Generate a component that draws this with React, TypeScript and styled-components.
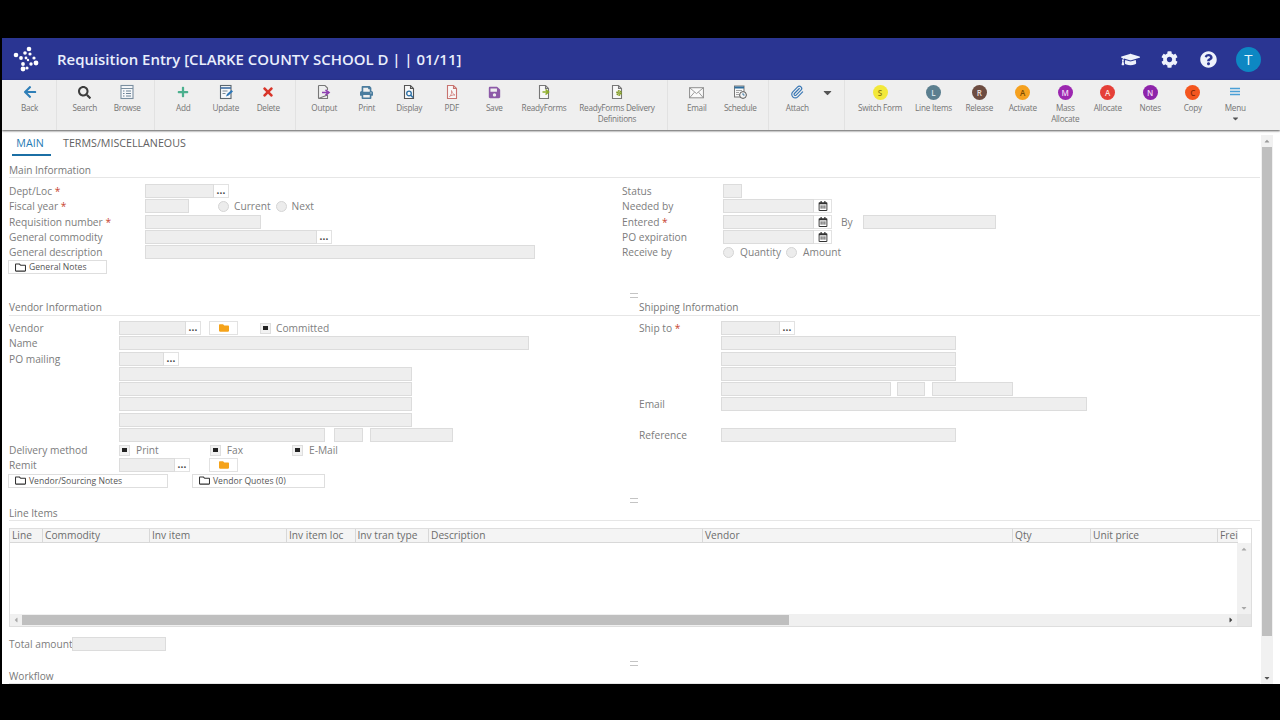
import React from 'react';
import styled, { createGlobalStyle } from 'styled-components';
import { FaArrowLeft, FaSearch, FaPlus, FaTimes, FaPrint, FaSave, FaCaretDown, FaCaretUp, FaCaretLeft, FaCaretRight, FaGraduationCap, FaCog, FaQuestionCircle, FaFolder, FaRegFolder, FaRegCalendarAlt } from 'react-icons/fa';
import { Paperclip } from 'lucide-react';

const Global = createGlobalStyle`
  html, body { margin: 0; padding: 0; background: #000; }
  * { box-sizing: border-box; }
  body { font-family: "Open Sans", "Liberation Sans", sans-serif; }
`;

const Page = styled.div`
  width: 1280px; height: 720px; background: #000; padding: 38px 0 36px 2px; overflow: hidden;
`;
const Frame = styled.div`
  height: 646px; background: #fff; display: flex; flex-direction: column; overflow: hidden;
`;
const Header = styled.header`
  height: 42px; flex: none; background: #2a3592; display: flex; align-items: center; color: #fff;
`;
const LogoBox = styled.svg`
  width: 30px; height: 30px; margin-left: 10px; flex: none;
`;
const Title = styled.h1`
  margin: 0 0 0 15px; font-size: 14.95px; font-weight: 600; color: #e9eefc; white-space: nowrap; flex: 1;
`;
const HeadIcon = styled.span`
  width: 39px; display: flex; justify-content: center; color: #eef2fb; font-size: 17px;
`;
const Avatar = styled.span`
  width: 25px; height: 25px; border-radius: 50%; background: #0d87c3; color: #e8f4fb; font-size: 15px;
  display: flex; align-items: center; justify-content: center; margin: 0 19px 0 8px;
`;
const Toolbar = styled.nav`
  height: 50px; flex: none; background: #efefef; display: flex; box-shadow: 0 1px 2px rgba(0,0,0,.65); position: relative; z-index: 1;
`;
const Group = styled.div<{ $w?: number; $pl?: number }>`
  display: flex; flex: none; width: ${p => (p.$w ? `${p.$w}px` : 'auto')}; padding-left: ${p => p.$pl ?? 0}px;
  border-right: ${p => (p.$w ? '1px solid #e2e2e2' : 'none')};
`;
const Tool = styled.div<{ $w: number }>`
  width: ${p => p.$w}px; flex: none; display: flex; flex-direction: column; align-items: center; padding-top: 4px;
`;
const ToolIcon = styled.div`
  height: 16px; display: flex; align-items: center; justify-content: center; font-size: 14px;
`;
const ToolLabel = styled.div`
  margin-top: 2px; font-size: 8.2px; letter-spacing: -0.25px; line-height: 11.4px; color: #757575; text-align: center; white-space: nowrap;
`;
const Badge = styled.span<{ $bg: string; $fg: string }>`
  width: 15px; height: 15px; border-radius: 50%; background: ${p => p.$bg}; color: ${p => p.$fg};
  font-size: 8px; font-weight: 600; display: flex; align-items: center; justify-content: center;
`;
const SmallCaret = styled.div`
  font-size: 9px; color: #555; line-height: 8px; height: 8px; margin-top: 1px;
`;
const Body = styled.div`
  flex: 1; min-height: 0; display: flex;
`;
const Main = styled.main`
  width: 1259px; flex: none; padding: 0 1px 0 7px; overflow: hidden;
`;
const Tabs = styled.div`
  height: 26px; display: flex; margin-left: 3px;
`;
const Tab = styled.div<{ $active?: boolean; $w: number; $ml?: number; $pr?: number }>`
  width: ${p => p.$w}px; margin-left: ${p => p.$ml ?? 0}px; padding: 1px ${p => p.$pr ?? 0}px 0 0; font-size: 10.7px; font-weight: 500; text-align: center; line-height: 24px; white-space: nowrap;
  color: ${p => (p.$active ? '#1f7bb3' : '#616161')};
  border-bottom: 2px solid ${p => (p.$active ? '#1b6fa5' : 'transparent')};
`;
const Heading = styled.div<{ $lh?: number; $mt?: number }>`
  height: 20px; margin-top: ${p => p.$mt ?? 0}px; display: flex; align-items: flex-end; border-bottom: 1px solid #e6e6e6;
  font-size: 10.1px; line-height: ${p => p.$lh ?? 14}px; color: #787878; white-space: nowrap;
`;
const Columns = styled.div<{ $left: number }>`
  display: grid; grid-template-columns: ${p => p.$left}px 1fr;
`;
const Rows = styled.div<{ $top: number }>`
  padding-top: ${p => p.$top}px;
`;
const Row = styled.div`
  height: 15.27px; display: flex; align-items: center; white-space: nowrap;
`;
const Label = styled.label<{ $w: number }>`
  width: ${p => p.$w}px; flex: none; font-size: 10.2px; color: #7c7c7c;
`;
const Req = styled.span`
  color: #c8442f;
`;
const Text = styled.span<{ $ml?: number }>`
  font-size: 10.2px; color: #808080; margin-left: ${p => p.$ml ?? 0}px;
`;
const Input = styled.div<{ $w: number; $ml?: number }>`
  width: ${p => p.$w}px; height: 14px; flex: none; background: #eeeeee; border: 1px solid #dcdcdc; margin-left: ${p => p.$ml ?? 0}px;
`;
const SideBtn = styled.div<{ $w: number }>`
  width: ${p => p.$w}px; height: 14px; flex: none; background: #fff; border: 1px solid #e2e2e2; border-left: none; display: flex; align-items: center; justify-content: center;
  font-size: 10px; font-weight: 700; color: #444; line-height: 14px;
`;
const Dots = styled.span` transform: translateY(-1px); letter-spacing: .2px; `;
const FolderBtn = styled.div<{ $ml: number }>`
  width: 29px; height: 14px; flex: none; margin-left: ${p => p.$ml}px; background: #fff; border: 1px solid #e2e2e2; display: flex; align-items: center; justify-content: center;
  color: #f5a31a; font-size: 10px;
`;
const Radio = styled.span<{ $ml: number }>`
  width: 11px; height: 11px; flex: none; border-radius: 50%; background: #ececec; border: 1px solid #d5d5d5; margin-left: ${p => p.$ml}px;
`;
const Check = styled.span<{ $ml: number }>`
  width: 11px; height: 11px; flex: none; margin-left: ${p => p.$ml}px; background: #f2f2f2; border: 1px solid #dedede; display: flex; align-items: center; justify-content: center;
  &::after { content: ''; width: 5px; height: 4px; background: #222; }
`;
const NoteBtn = styled.div<{ $w: number; $ml?: number; $pl: number }>`
  width: ${p => p.$w}px; height: 14px; flex: none; margin-left: ${p => p.$ml ?? 0}px; padding-left: ${p => p.$pl}px; background: #fff; border: 1px solid #dedede;
  display: flex; align-items: center; gap: 3px; font-size: 8.6px; color: #555; white-space: nowrap;
  svg { font-size: 11px; color: #333; flex: none; }
`;
const Splitter = styled.div<{ $mt: number }>`
  height: 4px; margin-top: ${p => p.$mt}px; display: flex; justify-content: center; padding-right: 1px;
  &::after { content: ''; width: 8px; height: 3px; margin-top: 1px; border-top: 1px solid #c4c4c4; border-bottom: 1px solid #c4c4c4; }
`;
const Grid = styled.div`
  width: 1243px; height: 99px; margin-top: 6.6px; border: 1px solid #dedede; display: flex; flex-direction: column;
`;
const GridHead = styled.div`
  width: 1228px; height: 14px; flex: none; display: flex; overflow: hidden;
`;
const Col = styled.div<{ $w: number }>`
  width: ${p => p.$w}px; flex: none; background: #f4f4f4; border-right: 1px solid #d8d8d8; border-bottom: 1px solid #d8d8d8; font-size: 10.2px; color: #6c6c6c; padding-left: 2px; line-height: 13px; white-space: nowrap; overflow: hidden;
`;
const GridBody = styled.div`
  flex: 1; min-height: 0; display: flex; justify-content: flex-end;
`;
const VTrack = styled.div`
  width: 14px; background: #f1f1f1; display: flex; flex-direction: column; justify-content: space-between; align-items: center; color: #a8a8a8; font-size: 8px; padding: 2px 0;
`;
const HTrack = styled.div`
  height: 12px; flex: none; background: #f0f0f0; display: flex; align-items: center;
`;
const Arrow = styled.div<{ $w: number; $dark?: boolean }>`
  width: ${p => p.$w}px; flex: none; display: flex; align-items: center; justify-content: center; font-size: 8px; color: ${p => (p.$dark ? '#444' : '#aaa')};
`;
const HThumb = styled.div`
  width: 767px; height: 10px; background: #bfbfbf;
`;
const HRest = styled.div` flex: 1; `;
const Corner = styled.div`
  width: 14px; height: 12px; flex: none; background: #e6e6e6;
`;
const TotalRow = styled.div`
  height: 14px; margin-top: 10px; display: flex; align-items: center; white-space: nowrap;
`;
const PageScroll = styled.aside`
  width: 12px; margin-top: 5px; flex: none; background: #f1f1f1; display: flex; flex-direction: column; align-items: center; color: #999; font-size: 8px;
`;
const PageArrow = styled.div`
  height: 12px; flex: none; display: flex; align-items: center; justify-content: center;
`;
const PageThumb = styled.div`
  width: 10px; height: 489px; flex: none; background: #bfbfbf;
`;
const PageRest = styled.div` flex: 1; `;
const PageEnd = styled.div`
  flex: none; height: 12px; display: flex; align-items: center; color: #555;
`;

const Svg: React.FC<{ children: React.ReactNode; size?: number }> = ({ children, size = 16 }) => (
  <svg width={size} height={size} viewBox="0 0 16 16" fill="none">{children}</svg>
);
const Doc = ({ c = '#777' }: { c?: string }) => (
  <path d="M3.5 1.5h6l3 3v10h-9z M9.5 1.5v3h3" stroke={c} strokeWidth="1.1" fill="#f8f8f8" />
);
const BrowseIcon = () => (
  <Svg><rect x="2" y="1.5" width="12" height="13" stroke="#7a8fa0" strokeWidth="1.1" fill="#f6f8fa" /><path d="M2 4.5h12" stroke="#7a8fa0" /><path d="M4 7h1.5M7 7h5M4 9.5h1.5M7 9.5h5M4 12h1.5M7 12h5" stroke="#6b8296" /></Svg>
);
const UpdateIcon = () => (
  <Svg><rect x="2.5" y="1.5" width="10.5" height="13" stroke="#5b6770" strokeWidth="1.1" fill="#f6f8fa" /><path d="M2.5 4h10.5" stroke="#3f6fa5" strokeWidth="1.6" /><path d="M4.5 7h5M4.5 9.5h3" stroke="#7a8a96" /><path d="M8 12.5l1-2.5 4.5-4 1.5 1.5-4.5 4z" fill="#2c77b8" /></Svg>
);
const OutputIcon = () => (
  <Svg><path d="M2.5 1.5h6.5l2.5 2.5v2M11.5 11v3.5h-9z" stroke="#777" strokeWidth="1.1" fill="none" /><path d="M2.5 1.5v13" stroke="#777" strokeWidth="1.1" /><path d="M6 8.5h5.5M9.5 5.8l3.5 2.7-3.5 2.7" stroke="#8d3fb0" strokeWidth="1.6" fill="none" /></Svg>
);
const DisplayIcon = () => (
  <Svg><Doc c="#555" /><circle cx="8" cy="9.5" r="2.3" stroke="#2a6fa5" strokeWidth="1.3" /><path d="M9.8 11.3l2.2 2.2" stroke="#2a6fa5" strokeWidth="1.5" /></Svg>
);
const PdfIcon = () => (
  <Svg><Doc c="#c8736f" /><path d="M5.5 12.5c2-1.5 2.5-4.5 2-6 .5 2.5 2 4 3.5 4.5-2-.2-4 .4-5.5 1.5z" stroke="#d07a76" strokeWidth=".8" fill="none" /></Svg>
);
const RfIcon = () => (
  <Svg><Doc c="#777" /><path d="M6.5 8h5M9.5 5.5l3 2.5-3 2.5" stroke="#8fae2b" strokeWidth="1.6" fill="none" /></Svg>
);
const RfdIcon = () => (
  <Svg><Doc c="#777" /><circle cx="10" cy="9" r="2" stroke="#7f9a1e" strokeWidth="1.8" strokeDasharray="1.4 .5" /><circle cx="10" cy="9" r="1" fill="#7f9a1e" /></Svg>
);
const MailIcon = () => (
  <Svg size={17}><rect x="1.5" y="3.5" width="13" height="9.5" stroke="#8a8a8a" strokeWidth=".9" fill="#fafafa" /><path d="M1.5 3.5L8 9l6.5-5.5M1.5 13L6 7.8M14.5 13L10 7.8" stroke="#8a8a8a" strokeWidth=".8" /></Svg>
);
const ScheduleIcon = () => (
  <Svg><rect x="2.5" y="2" width="9.5" height="11" stroke="#777" strokeWidth="1" fill="#f8f8f8" /><path d="M2.5 3.5h9.5" stroke="#2f6f9f" strokeWidth="2" /><path d="M4 6.5h6M4 8.5h3M4 10.5h3" stroke="#999" strokeWidth=".9" /><circle cx="11" cy="11" r="3.4" stroke="#555" strokeWidth="1" fill="#f4f4f4" /><path d="M11 9.2V11h1.6" stroke="#2f6f9f" strokeWidth=".9" /></Svg>
);
const MenuIcon = () => (
  <Svg><path d="M3 4.5h10M3 7.5h10M3 10.5h10" stroke="#4ba0d6" strokeWidth="1.5" /></Svg>
);
const Logo = () => {
  const dots: [number, number, number][] = [[15, 4, 2.3], [11, 8, 1.8], [16, 9, 1.6], [20, 13, 1.6], [2, 10, 2.3], [7, 13, 1.9], [12, 13, 1.4], [22, 18, 2.4], [17, 19, 1.7], [9, 24, 2.4], [9, 19, 1.9], [13, 23, 1.6], [14, 15, 1.2]];
  return <LogoBox viewBox="0 0 30 30">{dots.map(([x, y, r], i) => <circle key={i} cx={x + 2} cy={y + 1} r={r} fill="#fff" />)}</LogoBox>;
};

type ToolDef = { l: React.ReactNode; w?: number; i: React.ReactNode; caret?: boolean };
const T: React.FC<ToolDef> = ({ l, w = 42.5, i, caret }) => (
  <Tool $w={w}>
    <ToolIcon>{i}</ToolIcon>
    <ToolLabel>{l}</ToolLabel>
    {caret && <SmallCaret><FaCaretDown /></SmallCaret>}
  </Tool>
);
const B = (t: string, bg: string, fg: string) => <Badge $bg={bg} $fg={fg}>{t}</Badge>;

const Lookup: React.FC<{ w: number; b?: number }> = ({ w, b = 15 }) => (
  <><Input $w={w} /><SideBtn $w={b}><Dots>...</Dots></SideBtn></>
);
const DateField = () => (
  <><Input $w={91} /><SideBtn $w={18}><FaRegCalendarAlt size={10} color="#333" /></SideBtn></>
);

const cols: [string, number][] = [['Line', 33], ['Commodity', 107], ['Inv item', 137], ['Inv item loc', 68.5], ['Inv tran type', 73.5], ['Description', 274], ['Vendor', 310], ['Qty', 78], ['Unit price', 127], ['Frei', 40]];

export default function App() {
  return (
    <Page>
      <Global />
      <Frame>
        <Header>
          <Logo />
          <Title>Requisition Entry [CLARKE COUNTY SCHOOL D | | 01/11]</Title>
          <HeadIcon><FaGraduationCap size={19} /></HeadIcon>
          <HeadIcon><FaCog /></HeadIcon>
          <HeadIcon><FaQuestionCircle /></HeadIcon>
          <Avatar>T</Avatar>
        </Header>
        <Toolbar>
          <Group $w={55}><T w={55} l="Back" i={<FaArrowLeft color="#2f7fb8" />} /></Group>
          <Group $w={98} $pl={6.5}>
            <T l="Search" i={<FaSearch color="#3d3d3d" size={13} />} />
            <T l="Browse" i={<BrowseIcon />} />
          </Group>
          <Group $w={141} $pl={7}>
            <T l="Add" i={<FaPlus color="#4bb08e" size={12} />} />
            <T l="Update" i={<UpdateIcon />} />
            <T l="Delete" i={<FaTimes color="#d8352a" />} />
          </Group>
          <Group $w={372} $pl={7}>
            <T l="Output" i={<OutputIcon />} />
            <T l="Print" i={<FaPrint color="#4a7c9e" size={13} />} />
            <T l="Display" i={<DisplayIcon />} />
            <T l="PDF" i={<PdfIcon />} />
            <T l="Save" i={<FaSave color="#8d5aa8" size={13} />} />
            <T w={57} l="ReadyForms" i={<RfIcon />} />
            <T w={89} l={<>ReadyForms Delivery<br />Definitions</>} i={<RfdIcon />} />
          </Group>
          <Group $w={101} $pl={7}>
            <T w={43.5} l="Email" i={<MailIcon />} />
            <T w={43.5} l="Schedule" i={<ScheduleIcon />} />
          </Group>
          <Group $w={76} $pl={7}>
            <T l="Attach" i={<Paperclip size={14} color="#3a78b5" strokeWidth={2} />} />
            <Tool $w={17}><ToolIcon><FaCaretDown color="#555" size={13} /></ToolIcon></Tool>
          </Group>
          <Group $pl={5}>
            <T w={60} l="Switch Form" i={B('S', '#f2e83a', '#8c7d10')} />
            <T w={47} l="Line Items" i={B('L', '#5b7f8f', '#d5e2e8')} />
            <T w={44.5} l="Release" i={B('R', '#6d4c41', '#e8dcd8')} />
            <T l="Activate" i={B('A', '#f5a11f', '#7a4a00')} />
            <T l={<>Mass<br />Allocate</>} i={B('M', '#9c27b0', '#f0d8f5')} />
            <T l="Allocate" i={B('A', '#e53f38', '#fde0de')} />
            <T l="Notes" i={B('N', '#8e24aa', '#f0d8f5')} />
            <T l="Copy" i={B('C', '#f4561f', '#8a2b08')} />
            <T l="Menu" i={<MenuIcon />} caret />
          </Group>
        </Toolbar>
        <Body>
          <Main>
            <Tabs>
              <Tab $active $w={39} $pr={3}>MAIN</Tab>
              <Tab $w={122} $ml={12}>TERMS/MISCELLANEOUS</Tab>
            </Tabs>
            <Heading $mt={2}>Main Information</Heading>
            <Columns $left={613}>
              <Rows $top={5.4}>
                <Row><Label $w={136}>Dept/Loc <Req>*</Req></Label><Lookup w={69} /></Row>
                <Row><Label $w={136}>Fiscal year <Req>*</Req></Label><Input $w={44} /><Radio $ml={29} /><Text $ml={5}>Current</Text><Radio $ml={5} /><Text $ml={5}>Next</Text></Row>
                <Row><Label $w={136}>Requisition number <Req>*</Req></Label><Input $w={116} /></Row>
                <Row><Label $w={136}>General commodity</Label><Lookup w={172} /></Row>
                <Row><Label $w={136}>General description</Label><Input $w={390} /></Row>
                <Row><NoteBtn $w={99} $ml={-1} $pl={6}><FaRegFolder />General Notes</NoteBtn></Row>
              </Rows>
              <Rows $top={5.4}>
                <Row><Label $w={101}>Status</Label><Input $w={19} /></Row>
                <Row><Label $w={101}>Needed by</Label><DateField /></Row>
                <Row><Label $w={101}>Entered <Req>*</Req></Label><DateField /><Text $ml={9}>By</Text><Input $w={133} $ml={10} /></Row>
                <Row><Label $w={101}>PO expiration</Label><DateField /></Row>
                <Row><Label $w={101}>Receive by</Label><Radio $ml={0} /><Text $ml={6}>Quantity</Text><Radio $ml={5} /><Text $ml={6}>Amount</Text></Row>
              </Rows>
            </Columns>
            <Splitter $mt={17} />
            <Columns $left={630}>
              <div>
                <Heading $lh={16}>Vendor Information</Heading>
                <Rows $top={4.4}>
                  <Row><Label $w={110}>Vendor</Label><Lookup w={67} /><FolderBtn $ml={8}><FaFolder /></FolderBtn><Check $ml={22} /><Text $ml={5}>Committed</Text></Row>
                  <Row><Label $w={110}>Name</Label><Input $w={410} /></Row>
                  <Row><Label $w={110}>PO mailing</Label><Lookup w={45} /></Row>
                  <Row><Label $w={110} /><Input $w={293} /></Row>
                  <Row><Label $w={110} /><Input $w={293} /></Row>
                  <Row><Label $w={110} /><Input $w={293} /></Row>
                  <Row><Label $w={110} /><Input $w={293} /></Row>
                  <Row><Label $w={110} /><Input $w={206} /><Input $w={29} $ml={9} /><Input $w={83} $ml={7} /></Row>
                  <Row><Label $w={110}>Delivery method</Label><Check $ml={0} /><Text $ml={6}>Print</Text><Check $ml={51} /><Text $ml={6}>Fax</Text><Check $ml={49} /><Text $ml={6}>E-Mail</Text></Row>
                  <Row><Label $w={110}>Remit</Label><Lookup w={56} /><FolderBtn $ml={19}><FaFolder /></FolderBtn></Row>
                  <Row><NoteBtn $w={160} $ml={-1} $pl={6}><FaRegFolder />Vendor/Sourcing Notes</NoteBtn><NoteBtn $w={133} $ml={24} $pl={6}><FaRegFolder />Vendor Quotes (0)</NoteBtn></Row>
                </Rows>
              </div>
              <div>
                <Heading $lh={16}>Shipping Information</Heading>
                <Rows $top={4.4}>
                  <Row><Label $w={82}>Ship to <Req>*</Req></Label><Lookup w={59} /></Row>
                  <Row><Label $w={82} /><Input $w={235} /></Row>
                  <Row><Label $w={82} /><Input $w={235} /></Row>
                  <Row><Label $w={82} /><Input $w={235} /></Row>
                  <Row><Label $w={82} /><Input $w={170} /><Input $w={28} $ml={6} /><Input $w={81} $ml={7} /></Row>
                  <Row><Label $w={82}>Email</Label><Input $w={366} /></Row>
                  <Row />
                  <Row><Label $w={82}>Reference</Label><Input $w={235} /></Row>
                </Rows>
              </div>
            </Columns>
            <Splitter $mt={9} />
            <Heading>Line Items</Heading>
            <Grid>
              <GridHead>{cols.map(([n, w]) => <Col key={n} $w={w}>{n}</Col>)}</GridHead>
              <GridBody>
                <VTrack><FaCaretUp /><FaCaretDown /></VTrack>
              </GridBody>
              <HTrack>
                <Arrow $w={12}><FaCaretLeft /></Arrow>
                <HThumb />
                <HRest />
                <Arrow $w={12} $dark><FaCaretRight /></Arrow>
                <Corner />
              </HTrack>
            </Grid>
            <TotalRow><Label $w={63}>Total amount</Label><Input $w={94} /></TotalRow>
            <Splitter $mt={9} />
            <Heading>Workflow</Heading>
          </Main>
          <PageScroll>
            <PageArrow><FaCaretUp /></PageArrow>
            <PageThumb />
            <PageRest />
            <PageEnd><FaCaretDown /></PageEnd>
          </PageScroll>
        </Body>
      </Frame>
    </Page>
  );
}
